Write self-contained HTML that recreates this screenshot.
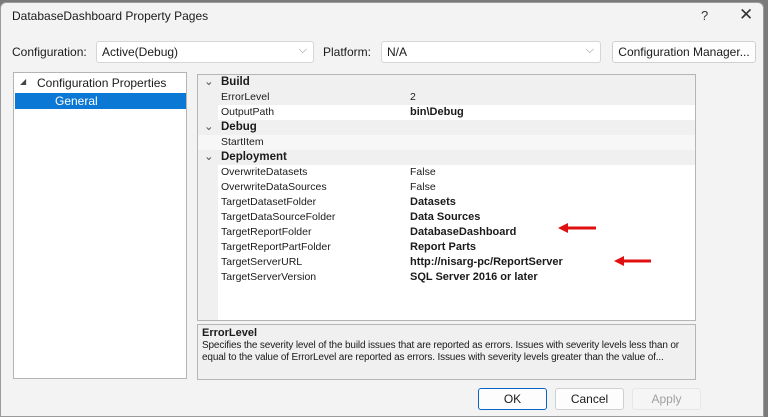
<!DOCTYPE html>
<html><head><meta charset="utf-8"><style>
*{margin:0;padding:0;box-sizing:border-box}
body{width:768px;height:417px;background:#7a7a7a;font-family:"Liberation Sans",sans-serif;font-size:12px;color:#1a1a1a;position:relative;overflow:hidden}
.win{position:absolute;left:0;top:2px;width:764px;height:415px;background:#f3f3f3;border:1px solid #9a9a9a;border-radius:6px 6px 0 0}
.abs{position:absolute}
.combo{position:absolute;height:22px;background:#fff;border:1px solid #d6d6d6;border-radius:3px;padding:3px 5px;font-size:12px}
.combo .ch{position:absolute;right:6px;top:2px;color:#888;font-size:11px}
.btn{position:absolute;height:22px;background:#fdfdfd;border:1px solid #d0d0d0;border-radius:3px;text-align:center;line-height:20px;font-size:12px}
.grid{position:absolute;left:196px;top:71px;width:499px;height:247px;background:#fff;border:1px solid #b5b5b5}
.row{position:absolute;left:0;width:497px;height:15px;font-size:10.5px;line-height:15px}
.row .n{position:absolute;left:23px}
.row .v{position:absolute;left:212px;font-weight:bold;font-size:11px}
.row .v.r{font-weight:normal;font-size:10.5px}
.cat{background:#f0f0f0;font-weight:bold;font-size:11.5px}
.cat .n{left:23px}
.cat .ar{position:absolute;left:6px;top:0;font-weight:normal;color:#555}
.g{position:absolute;left:0;top:0;width:20px;height:245px;background:#f0f0f0}
</style></head><body>
<div class="win">
<div class="abs" style="left:11px;top:6px;font-size:12px">DatabaseDashboard Property Pages</div>
<div class="abs" style="left:700px;top:5px;font-size:13px;color:#333">?</div>
<div class="abs" style="left:738px;top:2px;font-size:17px;color:#333">✕</div>
<div class="abs" style="left:11px;top:42px">Configuration:</div>
<div class="combo" style="left:95px;top:38px;width:218px">Active(Debug)<span class="ch">⌵</span></div>
<div class="abs" style="left:322px;top:42px">Platform:</div>
<div class="combo" style="left:380px;top:38px;width:220px">N/A<span class="ch">⌵</span></div>
<div class="btn" style="left:611px;top:38px;width:144px">Configuration Manager...</div>
<div class="abs" style="left:12px;top:69px;width:174px;height:307px;background:#fff;border:1px solid #b5b5b5">
 <div class="abs" style="left:6px;top:4px;font-size:8px;color:#444">◢</div>
 <div class="abs" style="left:23px;top:3px;font-size:12px">Configuration Properties</div>
 <div class="abs" style="left:1px;top:20px;width:171px;height:16px;background:#0a78d4;color:#fff;padding-left:40px;line-height:16px">General</div>
</div>
<div class="grid"><div class="g"></div>
<div class="row cat" style="top:0px"><span class="ar">⌄</span><span class="n">Build</span></div>
<div class="row" style="top:15px;background:#f0f0f0"><span class="n">ErrorLevel</span><span class="v r">2</span></div>
<div class="row" style="top:30px"><span class="n">OutputPath</span><span class="v">bin\Debug</span></div>
<div class="row cat" style="top:45px"><span class="ar">⌄</span><span class="n">Debug</span></div>
<div class="row" style="top:60px;background:#f7f7f7"><span class="n">StartItem</span></div>
<div class="row cat" style="top:75px"><span class="ar">⌄</span><span class="n">Deployment</span></div>
<div class="row" style="top:90px"><span class="n">OverwriteDatasets</span><span class="v r">False</span></div>
<div class="row" style="top:105px"><span class="n">OverwriteDataSources</span><span class="v r">False</span></div>
<div class="row" style="top:120px"><span class="n">TargetDatasetFolder</span><span class="v">Datasets</span></div>
<div class="row" style="top:135px"><span class="n">TargetDataSourceFolder</span><span class="v">Data Sources</span></div>
<div class="row" style="top:150px"><span class="n">TargetReportFolder</span><span class="v">DatabaseDashboard</span></div>
<div class="row" style="top:165px"><span class="n">TargetReportPartFolder</span><span class="v">Report Parts</span></div>
<div class="row" style="top:180px"><span class="n">TargetServerURL</span><span class="v">http://nisarg-pc/ReportServer</span></div>
<div class="row" style="top:195px"><span class="n">TargetServerVersion</span><span class="v">SQL Server 2016 or later</span></div>
</div>
<svg class="abs" style="left:555px;top:217px" width="100" height="50">
<path d="M40 8 H5" stroke="#e01010" stroke-width="3"/><path d="M2 8 L12 3 L12 13 Z" fill="#e01010"/>
<path d="M95 41 H63" stroke="#e01010" stroke-width="3"/><path d="M58 41 L68 36 L68 46 Z" fill="#e01010"/>
</svg>
<div class="abs" style="left:196px;top:321px;width:499px;height:56px;background:#f0f0f0;border:1px solid #b5b5b5;padding:2px 4px;font-size:10px;line-height:12.5px;letter-spacing:-0.15px">
<div style="font-weight:bold;font-size:11px;letter-spacing:0">ErrorLevel</div>
<div>Specifies the severity level of the build issues that are reported as errors. Issues with severity levels less than or equal to the value of ErrorLevel are reported as errors. Issues with severity levels greater than the value of...</div>
</div>
<div class="btn" style="left:477px;top:385px;width:69px;border:1px solid #0a64c8">OK</div>
<div class="btn" style="left:554px;top:385px;width:69px">Cancel</div>
<div class="btn" style="left:631px;top:385px;width:69px;color:#a0a0a0;background:#f5f5f5;border-color:#e6e6e6">Apply</div>
</div>
</body></html>
